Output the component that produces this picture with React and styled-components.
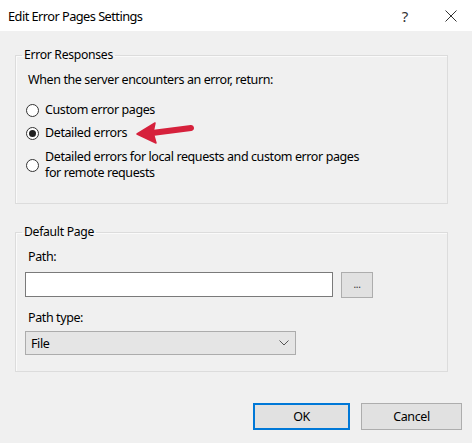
import React from "react";
import styled, { createGlobalStyle } from "styled-components";

const Global = createGlobalStyle`
  html, body { margin: 0; padding: 0; background: #ffffff; }
  body { font-family: "Noto Sans", "Liberation Sans", sans-serif; color: #000; }
  * { box-sizing: border-box; }
`;

const Dialog = styled.div`
  width: 474px;
  height: 443px;
  display: flex;
  flex-direction: column;
  background: #ffffff;
`;

const TitleBar = styled.div`
  height: 31px;
  display: flex;
  align-items: center;
  padding-left: 8px;
  background: #ffffff;
`;

const Title = styled.div`
  flex: 1;
  font-size: 12.8px;
  color: #000;
  letter-spacing: -0.55px;
`;

const TitleButton = styled.div`
  width: ${(p) => p.$w}px;
  height: 31px;
  display: flex;
  align-items: center;
  justify-content: center;
  color: #333;
  font-size: 15px;
`;

const Body = styled.div`
  flex: 1;
  width: 472px;
  background: #f0f0f0;
  padding: 16px 0 0 15px;
  display: flex;
  flex-direction: column;
  font-size: 12.5px;
  letter-spacing: -0.4px;
`;

const Group = styled.fieldset`
  margin: 0;
  width: 433px;
  border: 1px solid #dcdcdc;
  box-shadow: inset 1px 1px 0 #fafafa;
  padding: 0 12px ${(p) => p.$pb}px 12px;
  margin-top: ${(p) => p.$mt || 0}px;
  min-width: 0;
`;

const Legend = styled.legend`
  padding: 0 2px;
  margin-left: -6px;
  line-height: 16px;
  font-size: 12.2px;
  letter-spacing: -0.3px;
  color: #000;
`;

const Text = styled.div`
  line-height: 16px;
  margin-top: ${(p) => p.$mt || 0}px;
`;

const RadioRow = styled.label`
  display: flex;
  align-items: center;
  gap: 6px;
  margin-left: -2px;
  margin-top: ${(p) => p.$mt || 0}px;
  line-height: 16px;
`;

const RadioCircle = styled.span`
  width: 13px;
  height: 13px;
  flex: none;
  border-radius: 50%;
  border: 1px solid #333;
  background: #fff;
  display: flex;
  align-items: center;
  justify-content: center;
  &::after {
    content: "";
    width: 7px;
    height: 7px;
    border-radius: 50%;
    background: ${(p) => (p.$checked ? "#222" : "transparent")};
  }
`;

const Arrow = styled.svg`
  margin: -5px 0 -5px 2px;
  flex: none;
`;

const PathRow = styled.div`
  display: flex;
  align-items: flex-start;
  margin-top: 7px;
  margin-left: -3px;
  gap: 8px;
`;

const Input = styled.div`
  width: 308px;
  height: 25px;
  background: #fff;
  border: 1px solid #7a7a7a;
`;

const Browse = styled.div`
  width: 32px;
  height: 26px;
  background: #e1e1e1;
  border: 1px solid #adadad;
  display: flex;
  align-items: center;
  justify-content: center;
  font-size: 10px;
  color: #333;
  padding-bottom: 2px;
`;

const Select = styled.div`
  margin-top: 5px;
  margin-left: -3px;
  width: 271px;
  height: 24px;
  background: #e5e5e5;
  border: 1px solid #acacac;
  display: flex;
  align-items: center;
  justify-content: space-between;
  padding: 0 6px 0 5px;
`;

const Footer = styled.div`
  display: flex;
  justify-content: flex-end;
  gap: 11px;
  margin-top: 31px;
  padding-right: 10px;
  margin-left: -15px;
`;

const Button = styled.div`
  width: ${(p) => p.$w}px;
  height: 27px;
  background: #e1e1e1;
  border: ${(p) => (p.$default ? "2px solid #0078d7" : "1px solid #adadad")};
  display: flex;
  align-items: center;
  justify-content: center;
  font-size: 12.5px;
  color: #000;
`;

export default function App() {
  return (
    <>
      <Global />
      <Dialog>
        <TitleBar>
          <Title>Edit Error Pages Settings</Title>
          <TitleButton $w={46}>?</TitleButton>
          <TitleButton $w={46}>
            <svg width="12" height="12" viewBox="0 0 12 12">
              <path d="M0.5 0.5 L11.5 11.5 M11.5 0.5 L0.5 11.5" stroke="#333" strokeWidth="1" fill="none" />
            </svg>
          </TitleButton>
        </TitleBar>
        <Body>
          <Group $pb={22}>
            <Legend>Error Responses</Legend>
            <Text $mt={9}>When the server encounters an error, return:</Text>
            <RadioRow $mt={14}>
              <RadioCircle />
              Custom error pages
            </RadioRow>
            <RadioRow $mt={7}>
              <RadioCircle $checked />
              Detailed errors
              <Arrow width="60" height="26" viewBox="0 0 60 26">
                <path d="M2 14 L20 3 L18 12.5 L21 23 Z" fill="#d6213c" stroke="#d6213c" strokeWidth="1.5" strokeLinejoin="round" />
                <path d="M17 13 L56 8" stroke="#d6213c" strokeWidth="6" strokeLinecap="round" fill="none" />
              </Arrow>
            </RadioRow>
            <RadioRow $mt={8}>
              <RadioCircle />
              <span>
                Detailed errors for local requests and custom error pages
                <br />
                for remote requests
              </span>
            </RadioRow>
          </Group>
          <Group $pb={16} $mt={20}>
            <Legend>Default Page</Legend>
            <Text $mt={9}>Path:</Text>
            <PathRow>
              <Input />
              <Browse>...</Browse>
            </PathRow>
            <Text $mt={12}>Path type:</Text>
            <Select>
              <span>File</span>
              <svg width="10" height="6" viewBox="0 0 10 6">
                <path d="M0.5 0.5 L5 5 L9.5 0.5" stroke="#555" strokeWidth="1" fill="none" />
              </svg>
            </Select>
          </Group>
          <Footer>
            <Button $w={97} $default>OK</Button>
            <Button $w={101}>Cancel</Button>
          </Footer>
        </Body>
      </Dialog>
    </>
  );
}
